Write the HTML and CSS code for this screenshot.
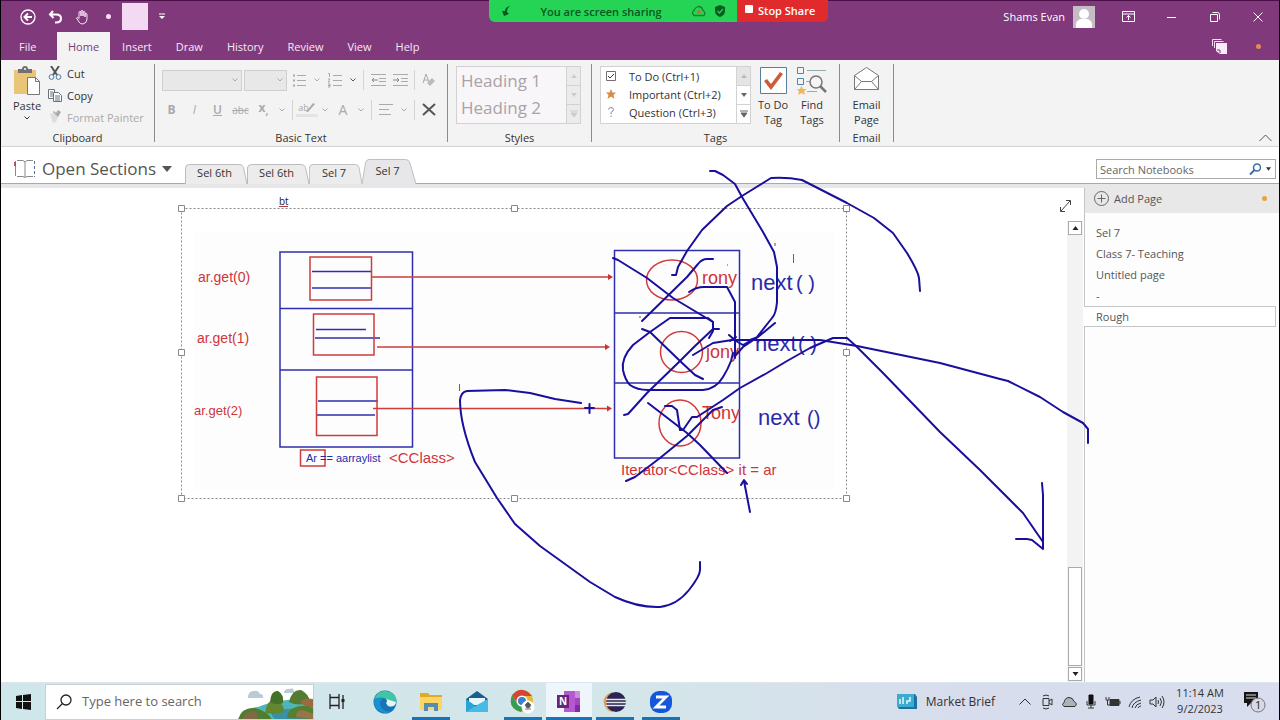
FILE: index.html
```html
<!DOCTYPE html>
<html lang="en">
<head>
<meta charset="utf-8">
<title>OneNote</title>
<link rel="stylesheet" href="styles.css">
</head>
<body>
<svg class="defs" width="0" height="0" aria-hidden="true">
  <symbol id="caret" viewBox="0 0 6 4"><path d="M0 0h6L3 4z" fill="currentColor"/></symbol>
  <symbol id="chev" viewBox="0 0 6 4"><path d="M.5 .5L3 3 5.500 .5" fill="none" stroke="currentColor"/></symbol>
  <symbol id="up" viewBox="0 0 6 4"><path d="M0 4h6L3 0z" fill="currentColor"/></symbol>
  <symbol id="more" viewBox="0 0 8 8"><path d="M0 1h8M1 3h6L4 7z" fill="currentColor" stroke="currentColor"/></symbol>
</svg>
<div class="share" role="status">
  <div class="share-on">
    <svg width="10" height="12" viewBox="0 0 10 12"><path d="M9 1Q4 2 4 6H1l2 5 5-2-2-2Q6 3 9 1z" fill="#075a20"/></svg>
    <span>You are screen sharing</span>
    <svg width="36" height="14" viewBox="0 0 36 14"><path d="M3 11.500h10q2-3-1-5-1-4-5-4-3 1-4 4-3 2 0 5z" fill="none" stroke="#15812f" stroke-width="1.300"/><circle cx="8" cy="8" r="2" fill="#b17b33"/><path d="M29 1l5 2v4q0 4-5 6-5-2-5-6V3z" fill="#075a20"/><path d="M26.500 7l2 2 3.500-4" fill="none" stroke="#24d052" stroke-width="1.300"/></svg>
  </div>
  <button class="stop"><i></i>Stop Share</button>
</div>
<header class="title">
  <button class="q" aria-label="Back"><svg width="16" height="16" viewBox="0 0 16 16" fill="none" stroke="#fff"><circle cx="8" cy="8" r="7" stroke-width="1.300"/><path d="M12 8H5M8 4.500L4.500 8 8 11.500" stroke-width="2"/></svg></button>
  <button class="q" aria-label="Undo"><svg width="14" height="14" viewBox="0 0 14 14" fill="none" stroke="#fff" stroke-width="2"><path d="M5 1L2 4.500 5.500 8M2 4.500h6q5 0 5 4t-5 4H7"/></svg></button>
  <button class="q" aria-label="Pan"><svg width="14" height="16" viewBox="0 0 14 16" fill="none" stroke="#fbe3f8"><path d="M4 9V3q1-1 2 0v4-5q1-1 2 0v5-4q1-1 2 0v5-3q1-1 2 0v5q0 4-4 5-3 0-4-2L1.500 9q1-1.500 3 1"/></svg></button>
  <button class="q" aria-label="Pen"><span class="pt"></span></button>
  <button class="swatch" aria-label="Color"></button>
  <button class="q" aria-label="Customize"><svg width="6" height="7" viewBox="0 0 6 7"><path d="M0 1h6" stroke="#fff"/><path d="M0 3h6L3 6z" fill="#fff"/></svg></button>
  <span class="grow"></span>
  <span class="user">Shams Evan</span>
  <svg class="avatar" width="22" height="22" viewBox="0 0 22 22"><path fill="#c6bcc6" d="M0 0h22v22H0z"/><circle cx="11" cy="8" r="5" fill="#fff"/><path d="M3 22v-3q0-5 5-6h6q5 1 5 6v3z" fill="#fff"/></svg>
  <button class="w" aria-label="Ribbon options"><svg width="13" height="11" viewBox="0 0 13 11" fill="none" stroke="#fff"><path d="M.5 .5h12v10H.5zM.5 3h12M6.500 9V4.500M4.500 6.500l2-2 2 2"/></svg></button>
  <button class="w" aria-label="Minimize"><svg width="10" height="10"><path d="M0 5.500h9" stroke="#fff"/></svg></button>
  <button class="w" aria-label="Restore"><svg width="10" height="10" viewBox="0 0 10 10" fill="none" stroke="#fff"><path d="M.5 2.500h7v7h-7zM2.500 .5h5q2 0 2 2v5"/></svg></button>
  <button class="w" aria-label="Close"><svg width="10" height="10" viewBox="0 0 10 10" stroke="#fff"><path d="M.5 .5l9 9M9.500 .5l-9 9"/></svg></button>
</header>
<nav class="tabs">
  <button class="file">File</button><button class="on">Home</button><button>Insert</button><button>Draw</button><button>History</button><button>Review</button><button>View</button><button>Help</button>
  <span class="grow"></span>
  <svg class="stack" width="15" height="15" viewBox="0 0 15 15"><path d="M.5 7V.5h9M2.500 9V2.500h9" fill="none" stroke="#f5dff3"/><path d="M4 4h11v11H8l-4-3z" fill="#fbeafa"/><path d="M5 11h3v3" fill="none" stroke="#80397b"/></svg>
  <span class="orange"></span>
</nav>
<section class="ribbon">
  <div class="group clip">
    <div class="body">
      <button class="big"><svg width="28" height="29" viewBox="0 0 28 29"><path d="M1 4h22v24H1z" fill="#eac477"/><path d="M5 3h4q0-3 3-3t3 3h4v4H5z" fill="#716f72"/><circle cx="12" cy="3" r="1" fill="#fff"/><path d="M14.500 11.500h8l4 4v13h-12z" fill="#fff" stroke="#777"/><path d="M22.500 11.500v4h4" fill="none" stroke="#777"/></svg><span>Paste</span><svg width="6" height="4"><use href="#chev"/></svg></button>
      <div class="stackcol">
        <button><svg width="14" height="14" viewBox="0 0 14 14" fill="none"><path d="M3 0l6 9M11 0L5 9" stroke="#555" stroke-width="2"/><circle cx="3.500" cy="11" r="2.400" stroke="#4a7fa0"/><circle cx="10.500" cy="11" r="2.400" stroke="#4a7fa0"/></svg>Cut</button>
        <button><svg width="14" height="14" viewBox="0 0 14 14" fill="#fff" stroke="#66727c"><path d="M.5 1.500h6v9h-6zM2 4h3M2 6h3M2 8h3"/><path d="M5.500 4.500h5l3 3v6h-8zM7 8h5M7 10h5M7 12h5"/></svg>Copy</button>
        <button class="dim"><svg width="14" height="14" viewBox="0 0 14 14"><path d="M2 4l4-1 4 4-2 5-3 1z" fill="#ddd"/><path d="M5 2l5 5 3-5-3-2-2 3-2-2z" fill="#aaa"/></svg>Format Painter</button>
      </div>
    </div>
    <h2>Clipboard</h2>
  </div>
  <div class="group text">
    <div class="body col">
      <div class="row">
        <span class="combo font"><svg width="6" height="4"><use href="#chev"/></svg></span><span class="combo size"><svg width="6" height="4"><use href="#chev"/></svg></span>
        <button class="t"><svg width="13" height="14" viewBox="0 0 13 14" stroke="#aaa"><path d="M4 2.500h9M4 7.500h9M4 12.500h9"/><path d="M0 2.500h2M0 7.500h2M0 12.500h2" stroke-width="2"/></svg></button><button class="c"><svg width="6" height="4"><use href="#chev"/></svg></button>
        <button class="t"><svg width="14" height="15" viewBox="0 0 14 15" stroke="#aaa" fill="none"><path d="M5 2.500h9M5 7.500h9M5 12.500h9M0 .5h1.500V4M0 6h2l-2 3h2M0 11h2v3H0M0 12.500h2"/></svg></button><button class="c dark"><svg width="6" height="4"><use href="#chev"/></svg></button>
        <i class="sep"></i>
        <button class="t"><svg width="15" height="12" viewBox="0 0 15 12" stroke="#aaa" fill="none"><path d="M0 .5h15M8 4.500h7M8 7.500h7M0 11.500h15"/><path d="M7 6H1M3 4L1 6l2 2" stroke="#888"/></svg></button><button class="t"><svg width="15" height="12" viewBox="0 0 15 12" stroke="#aaa" fill="none"><path d="M0 .5h15M8 4.500h7M8 7.500h7M0 11.500h15"/><path d="M0 6h6M4 4l2 2-2 2" stroke="#888"/></svg></button>
        <i class="sep"></i>
        <button class="t"><svg width="14" height="14" viewBox="0 0 14 14"><path d="M1 10L4 1l3 8M2 7h4" fill="none" stroke="#aaa"/><path d="M5 10l5-5 3 3-5 5z" fill="#bbb"/></svg></button>
      </div>
      <div class="row two">
        <button class="f"><b>B</b></button><button class="f"><em>I</em></button><button class="f"><u>U</u></button><button class="f"><s>abc</s></button><button class="f"><b>x<sub>,</sub></b></button><button class="c"><svg width="6" height="4"><use href="#chev"/></svg></button>
        <i class="sep"></i>
        <button class="t hl">ab<svg width="10" height="11" viewBox="0 0 10 11"><path d="M0 10l7-9 2 1-7 8z" fill="#aaa"/></svg></button><button class="c"><svg width="6" height="4"><use href="#chev"/></svg></button>
        <button class="t big-a">A</button><button class="c"><svg width="6" height="4"><use href="#chev"/></svg></button>
        <i class="sep"></i>
        <button class="t"><svg width="14" height="11" viewBox="0 0 14 11" stroke="#aaa"><path d="M0 .5h14M0 5.500h10M0 10.500h12"/></svg></button><button class="c"><svg width="6" height="4"><use href="#chev"/></svg></button>
        <i class="sep"></i>
        <button class="t"><svg width="14" height="13" viewBox="0 0 14 13" stroke="#555" stroke-width="2"><path d="M1 1l12 11M13 1L1 12"/></svg></button>
      </div>
    </div>
    <h2>Basic Text</h2>
  </div>
  <div class="group styles">
    <div class="body"><div class="gallery off"><div class="items"><button>Heading 1</button><button>Heading 2</button></div><div class="sc"><button><svg width="6" height="4"><use href="#up"/></svg></button><button><svg width="6" height="4"><use href="#caret"/></svg></button><button><svg width="8" height="8"><use href="#more"/></svg></button></div></div></div>
    <h2>Styles</h2>
  </div>
  <div class="group tags">
    <div class="body">
      <div class="gallery"><div class="items">
        <button><svg width="10" height="10" viewBox="0 0 10 10" fill="none"><path d="M.5 .5h9v9h-9z" stroke="#776d73"/><path d="M2 5l2 2 4-4" stroke="#444"/></svg>To Do (Ctrl+1)</button>
        <button><svg width="10" height="10" viewBox="0 0 10 10"><path d="M5 0l1.500 3.500H10L7.500 6 8.500 10 5 7.500 1.500 10l1-4L0 3.500h3.500z" fill="#d68b46"/></svg>Important (Ctrl+2)</button>
        <button><svg width="10" height="10" viewBox="0 0 10 10" fill="none" stroke="#8b78bd"><path d="M2.500 2.500Q3 .5 5 .5t2.500 2Q7.500 4 5 5.500V7M5 8.500V10"/></svg>Question (Ctrl+3)</button>
      </div><div class="sc"><button class="dis"><svg width="6" height="4"><use href="#up"/></svg></button><button><svg width="6" height="4"><use href="#caret"/></svg></button><button><svg width="8" height="8"><use href="#more"/></svg></button></div></div>
      <button class="big"><svg width="27" height="28" viewBox="0 0 27 28"><path d="M.5 .5h26v26H.5z" fill="#fff" stroke="#55809b"/><path d="M4 14l3-2 4 5 9-12 3 2-12 16z" fill="#cb5b3b"/></svg><span>To Do<br>Tag</span></button>
      <button class="big"><svg width="30" height="28" viewBox="0 0 30 28" fill="none"><path d="M.5 .5h6v6h-6zM.5 11.500h6v6h-6z" stroke="#4d87ae"/><path d="M10 3.500h19M9 14.500h4M10 24.500h10" stroke="#9aa8b0"/><circle cx="19" cy="15" r="6" stroke="#777" stroke-width="1.500" fill="#f5f5f5"/><path d="M23 19l6 6" stroke="#777" stroke-width="2.500"/><path d="M4.500 18.500L6 22h3.500L7 24.500 8 28l-3.500-2L1 28l1-3.500L0 22h3z" fill="#e8b867"/></svg><span>Find<br>Tags</span></button>
    </div>
    <h2>Tags</h2>
  </div>
  <div class="group email">
    <div class="body"><button class="big"><svg width="25" height="28" viewBox="0 0 25 28" fill="#fff" stroke="#777"><path d="M.5 9.500l12-8 12 8v14H.5z"/><path d="M.5 9.500l7 6h10l7-6M.5 23.500l7-8M24.500 23.500l-7-8" fill="none"/></svg><span>Email<br>Page</span></button></div>
    <h2>Email</h2>
  </div>
  <button class="collapse" aria-label="Collapse"><svg width="13" height="8" viewBox="0 0 13 8"><path d="M.5 7l6-6 6 6" fill="none" stroke="#555"/></svg></button>
</section>
<nav class="sections">
  <button class="book"><svg width="22" height="18" viewBox="0 0 22 18" fill="none" stroke="#8a8a8a"><path d="M3 .5h6l2 1.500 2-1.500h6M3 16.500h6l2 1 2-1h6M11 2v15M1.500 1v15"/><path d="M1 2v4" stroke="#bd4d58" stroke-width="2"/><path d="M20.500 1v16" stroke="#5b6f9b" stroke-dasharray="3 2"/></svg>Open Sections<svg width="10" height="6" viewBox="0 0 10 6"><path d="M0 0h10L5 6z" fill="#555"/></svg></button>
  <div class="stabs">
    <button><svg preserveAspectRatio="none" viewBox="0 0 62 20"><path d="M.5 20V4q0-3.500 4-3.500h50q3 0 4 3L62 20"/></svg><span>Sel 6th</span></button>
    <button><svg preserveAspectRatio="none" viewBox="0 0 62 20"><path d="M.5 20V4q0-3.500 4-3.500h50q3 0 4 3L62 20"/></svg><span>Sel 6th</span></button>
    <button class="short"><svg preserveAspectRatio="none" viewBox="0 0 62 20"><path d="M.5 20V4q0-3.500 4-3.500h50q3 0 4 3L62 20"/></svg><span>Sel 7</span></button>
    <button class="short cur"><svg preserveAspectRatio="none" viewBox="0 0 62 25"><path d="M0 25L4 4q1-3.500 4-3.500h42q4 0 5 3.500L62 25"/></svg><span>Sel 7</span></button>
  </div>
  <span class="grow"></span>
  <label class="find"><input type="text" placeholder="Search Notebooks" aria-label="Search Notebooks"><svg width="12" height="12" viewBox="0 0 12 12" fill="none" stroke="#3e6da0"><circle cx="8" cy="4.500" r="3.500" stroke-width="1.500"/><path d="M5.500 7L1 11.500" stroke-width="2"/></svg><svg width="5" height="4"><use href="#caret"/></svg></label>
</nav>
<div class="work">
  <main class="canvas">
    <svg class="page" width="1100" height="494" viewBox="1 188 1100 494">
      <path d="M195 232h640v258H195z" fill="#fdfdfe"/>
      <text x="279" y="205" font-size="10" fill="#222">bt</text><path d="M279 206.500h9" stroke="#b3384f"/>
      <path d="M181.500 208.500h665v290h-665z" fill="none" stroke="#888" stroke-dasharray="2 2"/>
      <g fill="#fff" stroke="#888"><path d="M178.500 205.500h6v6h-6zM511.500 205.500h6v6h-6zM843.500 205.500h6v6h-6zM178.500 349.500h6v6h-6zM843.500 349.500h6v6h-6zM178.500 495.500h6v6h-6zM511.500 495.500h6v6h-6zM843.500 495.500h6v6h-6z"/></g>
      <g class="blue"><path d="M280 252h132.500v195H280zM280 308.500h132M280 370h132M614.500 250.500h125v207.500h-125zM614.500 313h125M614.500 383h125"/><path d="M312 271.500h59M312 288h59M316 329.500h50M315 338h65M318 401h60M317 415h58"/></g>
      <g class="red"><path d="M310 257h61.500v43H310zM313.500 314H374v41h-60.500zM316.500 377H377v58.500h-60.500zM300.500 450H325v16h-24.500zM372 277h239M377 347h231M373 408.500h237"/><ellipse cx="672" cy="280" rx="25.500" ry="20"/><ellipse cx="681.500" cy="352" rx="21" ry="20.500"/><ellipse cx="680" cy="423" rx="21" ry="23"/></g>
      <path d="M608 274l5 3-5 3zM605 344l5 3-5 3zM607 405.500l5 3-5 3z" fill="#cf3030"/>
      <g class="lab" fill="#cf3438"><text x="198" y="282" font-size="14">ar.get(0)</text><text x="197" y="343" font-size="14">ar.get(1)</text><text x="194" y="415" font-size="13">ar.get(2)</text><text x="389" y="463" font-size="15">&lt;CClass&gt;</text><text x="702" y="284" font-size="18">rony</text><text x="706" y="358" font-size="18">jony</text><text x="702" y="419" font-size="18">Tony</text><text x="621" y="475" font-size="15">Iterator&lt;CClass&gt; it = ar</text></g>
      <g class="lab" fill="#2a2aa8"><text x="306" y="462" font-size="11">Ar == aarraylist</text><text x="751" y="290" font-size="22">next</text><text x="796" y="290" font-size="20">( )</text><text x="755" y="351" font-size="22">next</text><text x="798" y="351" font-size="20">( )</text><text x="758" y="425" font-size="22">next</text><text x="807" y="425" font-size="20">()</text></g>
      <path d="M793.500 254v9M459.500 384v7" stroke="#666"/><path d="M775 243v3M639 317h2M727 265h1" stroke="#555"/>
      <g class="ink">
        <path d="M710 171h5l8 4 12 9 7 13 21 35 11 20 3 15v35q-1 12-5 16l-15 19-14 8M775 323l-17 14-15 10-8 9M729 335l7 6 7 4M730 341l6-4M735 340h15l8-3"/>
        <path d="M672 275h4l2-8 9-16 15-21 25-24 15-10 29-18q16-1 31 2l45 23 27 15 19 15 14 20q11 18 12 25l1 13"/>
        <path d="M613 258l5 2 29 18 26 20 40 24v9l-4 7"/>
        <path d="M713 259h-6q-5 0-9 5l-11 13-45 44"/>
        <path d="M689 292q7-5 15-5h23l8 15v56"/>
        <path d="M713 322l-5-4h-38l-20 14-17 13q-12 13-10 25 2 10 7 15 7 5 18 5h55q13-1 20-13 5-8 8-16l2-8"/>
        <path d="M642 329l8 3 30 29 15 14 8 4M719 329h-6l-18 17-15 15-33 32-19 21-4 1"/>
        <path d="M693 355l20-12 19-3h88l37 6 83 17 60 16 8 2 32 16 23 15 20 11 5 6v14"/>
        <path d="M665 406h7l5 4 3 20h3l9-13h5l26-17 17-12 27-15 20-12 23-13 23-10h14l10 9 26 26 57 59 40 38 43 43 20 29"/>
        <path d="M1042 483l1 12v54l-11-9-5-1h-11M648 403l39 30 13 12 27 28M722 407l-9 3-26 26-27 22-25 19-9 4M744 481l6 31M741 485l3-5 3 4"/>
        <path d="M581 403l-26-4-25-6-25-3-38 1q-6 1-7 9 0 25 15 62l22 36 18 26 25 22 50 36 25 15q24 11 45 10 17-2 29-17 11-14 11-20v-8"/>
        <path d="M585 408h9M589.500 404v9"/>
      </g>
    </svg>
    <button class="full" aria-label="Full page"><svg width="11" height="12" viewBox="0 0 11 12" fill="none" stroke="#444"><path d="M1 11L10 1M6 .5h4.500V5M.5 7v4.500H5"/></svg></button>
    <div class="scroll"><button aria-label="Up"><svg width="7" height="4"><use href="#up"/></svg></button><span class="grow"></span><i></i><button aria-label="Down"><svg width="7" height="4"><use href="#caret"/></svg></button></div>
  </main>
  <aside class="pages">
    <button class="add"><svg width="15" height="15" viewBox="0 0 15 15" fill="none" stroke="#666"><circle cx="7.500" cy="7.500" r="7"/><path d="M3.500 7.500h8M7.500 3.500v8"/></svg>Add Page<span class="grow"></span><i></i></button>
    <a href="#p1">Sel 7</a><a href="#p2">Class 7- Teaching</a><a href="#p3">Untitled page</a><a href="#p4">-</a><a href="#p5" class="sel">Rough</a>
  </aside>
</div>
<footer class="taskbar">
  <button class="start" aria-label="Start"><svg width="15" height="16" viewBox="0 0 15 16"><path d="M0 2l6-1v6H0zM7 1l8-1v7H7zM0 8h6v7l-6-1zM7 8h8v8l-8-1z" fill="#111"/></svg></button>
  <label class="search"><svg width="16" height="16" viewBox="0 0 16 16" fill="none" stroke="#222"><circle cx="10" cy="6" r="5" stroke-width="1.300"/><path d="M6.500 9.500L1 15" stroke-width="1.300"/></svg><input type="text" placeholder="Type here to search" aria-label="Search">
    <svg width="75" height="36" viewBox="0 0 75 36"><path d="M10 12q1-5 6-5 4-1 6 3 4 0 3 4H10zM46 8q2-4 6-3 3-2 4 2v2H46z" fill="#b9cbd6"/><path d="M0 36q5-12 20-13 20-9 55-8v21z" fill="#4fb6b8"/><path d="M38 36q-10-8 3-10 20-4 34 2v8z" fill="#3b90a2"/><path d="M0 36q3-13 17-12 14 4 17 12z" fill="#4f7c2e"/><path d="M4 35q5-9 13-8 4 3 2 8z" fill="#7e6a43"/><path d="M27 29q2-14 10-13 10 4 9 12-10 3-19 1z" fill="#63872e"/><path d="M32 18q1-12 8-11 6 3 5 12-7 3-13-1z" fill="#447229"/><path d="M51 18q3-13 12-12 8 4 9 12-11 5-21 0z" fill="#557b30"/><path d="M62 18q5-5 13-3v8q-8 1-13-5z" fill="#986b40"/><path d="M49 34q0-8 9-11 9-3 17 1v11z" fill="#55812f"/><path d="M58 33q0-7 7-7l10 4v5z" fill="#9a724b"/></svg></label>
  <button class="app view" aria-label="Task view"><svg width="16" height="16" viewBox="0 0 16 16" fill="none" stroke="#222" stroke-width="1.300"><path d="M1 3.500h9v8H1zM1 0v3M10 0v3M1 12v3M10 12v3M14 1v14"/><path d="M14 5v3" stroke-width="3"/></svg></button>
  <button class="app" aria-label="Edge"><svg width="24" height="24" viewBox="0 0 24 24"><circle cx="12" cy="12" r="11.500" fill="#1576b5"/><path d="M1 10Q4 0 13 1q10 1 10.500 10 0 6-7 5-4-1-2-3 1-4-4-5Q4 7 1 10z" fill="#41c5a5"/><path d="M1 11q4-5 10-3-6 3-3 9 4 6 11 4-7 5-14-1-4-3-4-9z" fill="#1b91ce"/><path d="M13 13q2-2 0-4l10 3q-1 6-8 4z" fill="#e9f3f4"/></svg></button>
  <button class="app run" aria-label="File Explorer"><svg width="22" height="20" viewBox="0 0 22 20"><path d="M0 1h8l2 2h12v15H0z" fill="#e2a928"/><path d="M0 5h22v13H0z" fill="#fad665"/><path d="M4 19v-8h14v8h-4v-4H8v4z" fill="#558dac"/></svg></button>
  <button class="app" aria-label="Mail"><svg width="24" height="22" viewBox="0 0 24 22"><path d="M1 8L12 0l11 8v13H1z" fill="#185e91"/><path d="M4 7h16v7H4z" fill="#e8f5fa"/><path d="M1 8l11 8 11-8v13H1z" fill="#27a3d8"/><path d="M1 21l11-7 11-6v13z" fill="#46bce4"/></svg></button>
  <button class="app run" aria-label="Chrome"><svg width="26" height="25" viewBox="0 0 26 25"><circle cx="12" cy="12" r="11" fill="#e5ba31"/><path d="M2 6Q12-5 22 7h-9l-5 8z" fill="#d54536"/><path d="M2 6l6 10 6 1-3 6Q-3 19 2 6z" fill="#359c57"/><circle cx="12" cy="12" r="5.500" fill="#fff"/><circle cx="12" cy="12" r="4" fill="#397ed0"/><circle cx="18" cy="18" r="6.500" fill="#fff"/><path d="M18 13l3 3-2 3h-2l-2-3zM15 20h6" fill="#555" stroke="#777"/></svg></button>
  <button class="app run active" aria-label="OneNote"><svg width="24" height="23" viewBox="0 0 24 23"><path d="M7 1h16v21H7z" fill="#b459cf"/><path d="M18 1h5v7h-5z" fill="#cd88df"/><path d="M18 8h5v7h-5z" fill="#a148be"/><path d="M18 15h5v7h-5z" fill="#842ba3"/><path d="M0 5h12v13H0z" fill="#68247d"/><text x="2" y="15" font-size="10" font-weight="bold" fill="#fff">N</text></svg></button>
  <button class="app run" aria-label="Eclipse"><svg width="24" height="22" viewBox="0 0 24 22"><path d="M9 1Q-1 5 1 13q2 7 9 8" fill="#e19b55"/><circle cx="13" cy="11" r="10" fill="#292451"/><path d="M3 8.500h20M3 11.500h20M3 14.500h20" stroke="#e8e6ed" stroke-width="1.300"/></svg></button>
  <button class="app run" aria-label="Zoom"><svg width="24" height="24" viewBox="0 0 24 24"><rect x="1" y="1" width="22" height="22" rx="9" fill="#1557dc"/><path d="M7 7h10L7 17h10" fill="none" stroke="#fff" stroke-width="2.800"/></svg></button>
  <span class="grow"></span>
  <button class="news"><svg width="20" height="15" viewBox="0 0 20 15"><path d="M3 0h15l2 3v12H2l-2-3V0z" fill="#1c719f"/><path d="M0 0h17v13H0z" fill="#3babd0"/><path d="M3 10V5M6 10V3M10 10V7h3V3" stroke="#e5faff" stroke-width="1.500" fill="none"/></svg>Market Brief</button>
  <div class="tray">
    <svg viewBox="0 0 16 16"><path d="M2.500 10.500L8 5l5.500 5.500"/></svg>
    <svg viewBox="0 0 16 16"><path d="M4 4.500h6v7H4zM10 7l3-2v6l-3-2M4 2q3-2 6 0M4 14q3 2 6 0"/></svg>
    <svg viewBox="0 0 16 16"><path d="M3 12.500q-3-2 0-4 1-5 5-5t5 4q4 2 1 5z" fill="#aeb3ba"/></svg>
    <svg viewBox="0 0 16 16"><path d="M6 1h4v9H6z" fill="#111" stroke="#111"/><path d="M4 7v4h8V7M8 11v3M5 14h6"/></svg>
    <svg viewBox="0 0 16 16"><path d="M5 5.500h9v6H5z" fill="#333"/><path d="M15 7v3M1 3v3h3V3M2.500 6v5H5"/></svg>
    <svg viewBox="0 0 16 16"><path d="M2 13Q4 5 13 3M5 14q1-6 9-8M8 14q1-4 6-5M11 14q1-2 3-2"/></svg>
    <svg viewBox="0 0 16 16"><path d="M1 6h3l3-3v10l-3-3H1zM9 6q1 2 0 4M11 4q3 4 0 8M13 2q4 6 0 12"/></svg>
  </div>
  <div class="clock"><span>11:14 AM</span><span>9/2/2023</span></div>
  <button class="note" aria-label="Notifications"><svg width="24" height="24" viewBox="0 0 24 24"><path d="M1 2h14v11H8l-4 4v-4H1z" fill="#151515"/><path d="M3 5h10M3 8h10" stroke="#ddd"/><circle cx="15" cy="15" r="7" fill="#d7dae5" stroke="#777"/><text x="12" y="19" font-size="11" fill="#222">1</text></svg></button>
</footer>
</body>
</html>
```
FILE: styles.css
```css
* { box-sizing: border-box; }
body {
  margin: 0; min-height: 100vh; display: flex; flex-direction: column;
  background: #fff; color: #333; font: 11px/15px "Open Sans", "Noto Sans", sans-serif;
  border: solid #000; border-width: 0 1px; overflow: hidden;
}
button, input { font: inherit; color: inherit; border: 0; background: none; padding: 0; margin: 0; }
svg { display: block; flex: none; }
.defs { position: absolute; }
.grow { flex: 1; }

.share { position: absolute; z-index: 3; top: 0; left: 489px; display: flex; height: 22px; border-radius: 0 0 6px 6px; overflow: hidden; font-weight: 600; }
.share-on { width: 248px; display: flex; align-items: center; justify-content: space-between; padding: 0 10px 0 12px; background: #25d455; color: #0a5724; }
.stop { width: 91px; background: #e02a2c; color: #fff; display: flex; align-items: flex-start; gap: 5px; padding: 3px 8px; }
.stop i { width: 8px; height: 8px; margin-top: 2px; background: #fff; border-radius: 1px; }

.title { height: 32px; background: #80397b; border-top: 1px solid #4c0f49; display: flex; align-items: center; padding-left: 13px; color: #fff; }
.q { width: 27px; display: flex; justify-content: center; }
.pt { width: 5px; height: 5px; border-radius: 50%; background: #fbe0f8; }
.swatch { width: 26px; height: 27px; background: #f3d9f2; }
.avatar { margin: 0 12px 0 8px; }
.w { width: 43px; height: 26px; display: flex; justify-content: center; align-items: center; }

.tabs { height: 28px; background: #80397b; display: flex; align-items: center; color: #f8e8f7; }
.tabs button { height: 28px; padding: 0 12px; }
.tabs .file { width: 56px; padding: 0 20px 0 18px; text-align: left; }
.tabs .on { background: #f3f3f3; color: #7b3a77; padding: 0 11px; }
.stack { margin-right: 29px; }
.orange { width: 5px; height: 5px; border-radius: 50%; background: #e8894f; margin-right: 18px; }

.ribbon { height: 87px; background: #f3f3f3; border-bottom: 1px solid #d2d2d2; display: flex; padding: 4px 0; }
.group { border-right: 1px solid #8b8b8b; display: flex; flex-direction: column; justify-content: space-between; }
.clip { width: 154px; } .text { width: 293px; } .styles { width: 144px; } .tags { width: 248px; } .email { width: 54px; }
.group h2 { margin: 0; font: inherit; line-height: 8px; text-align: center; }
.body { display: flex; height: 64px; }
.col { flex-direction: column; }
.big { display: flex; flex-direction: column; align-items: center; gap: 3px; padding-top: 2px; }
.clip .body { padding-left: 12px; gap: 7px; }
.stackcol { display: flex; flex-direction: column; justify-content: space-between; padding: 0 0 2px; }
.stackcol button { display: flex; align-items: center; gap: 5px; height: 18px; }
.dim { color: #aaa; }
.row { height: 25px; display: flex; align-items: center; color: #aaa; padding: 7px 0 0 7px; }
.two { height: 36px; padding: 5px 0 0 5px; }
.combo { height: 21px; border: 1px solid #cfcfcf; background: #e8e8e8; display: flex; align-items: center; justify-content: flex-end; padding-right: 3px; }
.font { width: 80px; margin-right: 2px; } .size { width: 43px; margin-right: 1px; }
.t { width: 22px; display: flex; justify-content: center; }
.c { width: 14px; display: flex; justify-content: center; }
.c.dark { color: #555; }
.sep { width: 1px; height: 20px; background: #d4d4d4; margin: 0 3px; }
.f { width: 23px; font-size: 12px; } .f s { font-size: 10px; } .f u { font-weight: 600; }
.hl { font-size: 9px; line-height: 12px; border-bottom: 3px solid #e4e4e4; }
.hl svg { margin-left: -3px; }
.big-a { font-size: 14px; }
.styles .body { padding: 2px 8px; } .tags .body { padding: 2px 8px; }
.gallery { height: 58px; display: flex; border: 1px solid #d2d2d2; background: #fff; }
.styles .gallery { width: 125px; } .tags .gallery { width: 151px; }
.items { flex: 1; display: flex; flex-direction: column; padding-bottom: 2px; }
.items button { flex: 1; display: flex; align-items: center; gap: 13px; padding-left: 5px; white-space: nowrap; }
.off .items { color: #aaa2a8; font-size: 17px; background: #f8f6f8; }
.off .items button { padding-left: 4px; }
.off .sc { color: #ccc; background: #ebebeb; }
.sc { width: 14px; display: flex; flex-direction: column; border-left: 1px solid #d2d2d2; color: #666; }
.sc button { flex: 1; display: flex; align-items: center; justify-content: center; }
.sc button + button { border-top: 1px solid #d2d2d2; }
.dis { background: #e5e5e5; color: #bbb; }
.tags .big { width: 44px; padding-top: 1px; gap: 2px; } .tags .big + .big { width: 34px; }
.email .big { width: 53px; }
.collapse { margin: auto 7px 0 auto; }

.sections { height: 41px; border-bottom: 4px solid #e7e7e9; display: flex; align-items: flex-end; background: linear-gradient(#a9a9a9, #a9a9a9) bottom/100% 1px no-repeat #fff; }
.book { display: flex; align-items: center; gap: 6px; font-size: 17px; line-height: 24px; color: #555; padding: 0 0 3px 13px; width: 184px; white-space: nowrap; }
.stabs { display: flex; align-items: flex-end; }
.stabs button { position: relative; width: 62px; height: 20px; padding: 0 3px 3px 0; text-align: center; }
.stabs svg { position: absolute; inset: 0; width: 100%; height: 100%; fill: #ececec; stroke: #bbb; }
.stabs span { position: relative; }
.stabs .short { width: 53px; } .stabs .cur { width: 54px; height: 25px; } .cur svg { fill: #e7e7e9; }
.find { width: 180px; height: 20px; border: 1px solid #aaa; display: flex; align-items: center; gap: 5px; padding: 0 4px 0 3px; margin: 0 3px 5px 0; }
.find input { flex: 1; min-width: 0; }
input::placeholder { color: #666; opacity: 1; }

.work { flex: 1; display: flex; min-height: 0; }
.canvas { flex: 1; position: relative; display: flex; justify-content: flex-end; min-width: 0; }
.page { position: absolute; left: 0; top: 0; z-index: 2; overflow: visible; pointer-events: none; font-family: "Open Sans", sans-serif; }
.lab { font-family: "Liberation Sans", Arial, sans-serif; }
.blue { fill: none; stroke: #2f2fae; stroke-width: 1.5; }
.red { fill: none; stroke: #d03c3c; stroke-width: 1.5; }
.ink { fill: none; stroke: #1a0f9c; stroke-width: 2; stroke-linecap: round; stroke-linejoin: round; }
.full { align-self: flex-start; padding-top: 12px; margin-right: -4px; }
.scroll { width: 16px; margin: 33px 1px 0 0; display: flex; flex-direction: column; background: #f3f3f4; }
.scroll button, .scroll i { width: 14px; height: 14px; border: 1px solid #aaa; background: #fff; display: flex; align-items: center; justify-content: center; margin: 0 1px 1px; color: #222; }
.scroll i { height: 99px; }
.pages { width: 195px; border-left: 1px solid #c5c5c5; background: #fdfdfd; display: flex; flex-direction: column; color: #555; }
.add { height: 29px; margin: -4px 0 9px; background: #e8e8e8; display: flex; align-items: center; gap: 5px; padding: 0 12px 0 9px; }
.add i { width: 5px; height: 5px; border-radius: 50%; background: #e8a33c; }
.pages a { color: inherit; text-decoration: none; line-height: 21px; padding-left: 11px; }
.pages .sel { background: #fff; border: 1px solid #c5c5c5; border-left: 0; margin: 0 3px 0 -1px; padding-left: 12px; line-height: 19px; }

.taskbar { height: 38px; background: linear-gradient(90deg, #cfe7eb, #d4e6ea 50%, #d7dded 75%, #d9ddef); border-top: 1px solid #dce6ec; display: flex; align-items: center; }
.start { width: 44px; display: flex; justify-content: center; }
.search { width: 269px; height: 36px; background: #fff; border: 1px solid #c8d0d2; display: flex; align-items: center; gap: 10px; padding-left: 10px; overflow: hidden; font-size: 13px; }
.search input { flex: 1; min-width: 0; }
.app { width: 46px; height: 37px; display: flex; align-items: center; justify-content: center; position: relative; }
.view { margin-right: 2px; }
.run::after { content: ""; position: absolute; left: 4px; right: 4px; bottom: 0; height: 3px; background: #1a73b5; }
.active { background: #eff6fb; } .active::after { left: 0; right: 0; }
.news { display: flex; align-items: center; gap: 9px; font-size: 12px; margin-right: 22px; }
.tray { display: flex; gap: 6px; }
.tray svg { width: 16px; height: 16px; fill: none; stroke: #333; }
.clock { width: 68px; padding-left: 2px; display: flex; flex-direction: column; align-items: center; line-height: 16px; padding-bottom: 2px; }
.note { margin: 0 12px 0 10px; }
```
